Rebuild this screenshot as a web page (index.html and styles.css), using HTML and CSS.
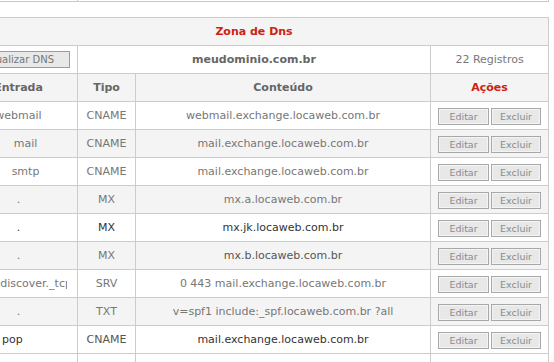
FILE: index.html
```html
<!DOCTYPE html>
<html lang="pt-BR">
<head>
<meta charset="utf-8">
<title>Zona de Dns</title>
<link rel="stylesheet" href="styles.css">
</head>
<body>
<div class="wrap">
  <table class="prev">
    <colgroup><col class="c1"><col class="c234"></colgroup>
    <tr><td></td><td></td></tr>
  </table>

  <table class="dns">
    <colgroup><col class="c1"><col class="c2"><col class="c3"><col class="c4"></colgroup>
    <tr class="grey"><td colspan="4" class="title">Zona de Dns</td></tr>
    <tr>
      <td class="btncell"><button class="upd">Atualizar DNS</button></td>
      <td colspan="2" class="domain">meudominio.com.br</td>
      <td class="count">22 Registros</td>
    </tr>
    <tr class="grey head">
      <td><div class="clip">Entrada</div></td>
      <td>Tipo</td>
      <td>Conteúdo</td>
      <td class="red">Ações</td>
    </tr>
    <tr>
      <td><div class="clip">webmail</div></td><td>CNAME</td><td>webmail.exchange.locaweb.com.br</td>
      <td class="acts"><button class="b ed">Editar</button><button class="b ex">Excluir</button></td>
    </tr>
    <tr class="grey">
      <td><div class="clip nudge">mail</div></td><td>CNAME</td><td>mail.exchange.locaweb.com.br</td>
      <td class="acts"><button class="b ed">Editar</button><button class="b ex">Excluir</button></td>
    </tr>
    <tr>
      <td><div class="clip nudge">smtp</div></td><td>CNAME</td><td>mail.exchange.locaweb.com.br</td>
      <td class="acts"><button class="b ed">Editar</button><button class="b ex">Excluir</button></td>
    </tr>
    <tr class="grey">
      <td><div class="clip">.</div></td><td>MX</td><td>mx.a.locaweb.com.br</td>
      <td class="acts"><button class="b ed">Editar</button><button class="b ex">Excluir</button></td>
    </tr>
    <tr class="dark">
      <td><div class="clip">.</div></td><td>MX</td><td>mx.jk.locaweb.com.br</td>
      <td class="acts"><button class="b ed">Editar</button><button class="b ex">Excluir</button></td>
    </tr>
    <tr class="grey">
      <td><div class="clip">.</div></td><td>MX</td><td class="mid">mx.b.locaweb.com.br</td>
      <td class="acts"><button class="b ed">Editar</button><button class="b ex">Excluir</button></td>
    </tr>
    <tr>
      <td><div class="clip">_autodiscover._tcp</div></td><td>SRV</td><td>0 443 mail.exchange.locaweb.com.br</td>
      <td class="acts"><button class="b ed">Editar</button><button class="b ex">Excluir</button></td>
    </tr>
    <tr class="grey">
      <td><div class="clip">.</div></td><td>TXT</td><td>v=spf1 include:_spf.locaweb.com.br ?all</td>
      <td class="acts"><button class="b ed">Editar</button><button class="b ex">Excluir</button></td>
    </tr>
    <tr class="dark">
      <td><div class="clip left">pop</div></td><td class="mid">CNAME</td><td>mail.exchange.locaweb.com.br</td>
      <td class="acts"><button class="b ed">Editar</button><button class="b ex">Excluir</button></td>
    </tr>
    <tr class="tail">
      <td></td><td></td><td></td><td></td>
    </tr>
  </table>
</div>
</body>
</html>
```

FILE: styles.css
```css
html, body {
  margin: 0;
  padding: 0;
  background: #ffffff;
}
body {
  font-family: "DejaVu Sans", Verdana, sans-serif;
  font-size: 11px;
  color: #777777;
  overflow: hidden;
}
.wrap {
  margin-left: -36px;
  width: 584px;
}
table {
  border-collapse: collapse;
  table-layout: fixed;
  width: 584px;
}
col.c1 { width: 113px; }
col.c2 { width: 58px; }
col.c3 { width: 295px; }
col.c4 { width: 118px; }
col.c234 { width: 471px; }

.prev td {
  height: 1px;
  padding: 0;
  border-right: 1px solid #c8c8c8;
  border-bottom: 1px solid #c8c8c8;
}
.prev {
  margin-bottom: 15px;
}

.dns td {
  border: 1px solid #cccccc;
  height: 27px;
  padding: 0 3px;
  text-align: center;
  vertical-align: middle;
  white-space: nowrap;
  overflow: hidden;
}
.dns td:first-child {
  padding: 0 10px 0 5px;
}
.clip {
  overflow: hidden;
  white-space: nowrap;
  text-align: center;
}
.clip.nudge { padding-left: 14px; }
.clip.left { text-align: left; padding-left: 32px; }

.dns tr.grey td { background: #f4f4f4; }

.title {
  color: #cc2211;
  font-weight: bold;
}
.domain {
  font-weight: bold;
  color: #666666;
}
.count {
  color: #777777;
}
.dns td.btncell {
  text-align: right;
  padding-right: 11px;
}
.upd {
  font-family: "DejaVu Sans", Verdana, sans-serif;
  font-size: 10px;
  color: #777777;
  background: #e8e8e8;
  border: 1px solid #9c9c9c;
  height: 17px;
  width: 100px;
  padding: 0 15px 0 0;
  margin: 0;
  text-align: right;
}
.head td {
  font-weight: bold;
  color: #666666;
}
.head td.red { color: #cc2211; }

.dark td { color: #333333; }
.dns td.mid { color: #555555; }

.acts {
  font-size: 0;
}
.b {
  font-family: "DejaVu Sans", Verdana, sans-serif;
  font-size: 9.5px;
  color: #8a8a8a;
  background: #e8e8e8;
  border: 1px solid #a8a8a8;
  box-shadow: inset 0 0 0 1px #f4f4f4;
  height: 17px;
  padding: 0;
  margin: 1px 0 0 0;
  vertical-align: middle;
}
.b.ed { width: 51px; margin-right: 2px; }
.b.ex { width: 50px; }
```
